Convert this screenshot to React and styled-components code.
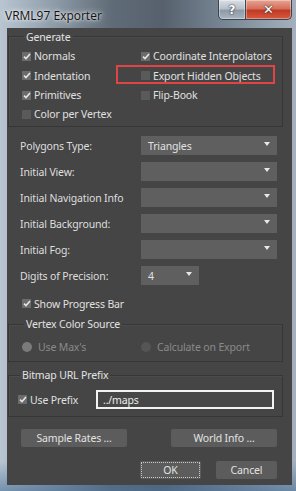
import React from "react";
import styled, { createGlobalStyle } from "styled-components";

const Global = createGlobalStyle`
  html, body { margin: 0; padding: 0; }
  body { font-family: "Noto Sans", "Open Sans", sans-serif; }
`;

const Window = styled.div`
  width: 296px;
  height: 491px;
  box-sizing: border-box;
  padding: 0 4px 6px 7px;
  display: flex;
  flex-direction: column;
  background:
    linear-gradient(180deg, rgba(255,255,255,0) 0%, rgba(255,255,255,0) 94%, rgba(70,110,150,0.6) 100%),
    linear-gradient(90deg, #b9c6d2 0%, #98a6b3 14%, #5f6b77 38%, #56616d 55%, #7c8a98 78%, #a4b1bd 100%);
`;

const TitleBar = styled.div`
  height: 29px;
  display: flex;
  align-items: flex-start;
  margin-left: -7px;
  margin-right: -4px;
`;

const Title = styled.div`
  padding: 7px 0 0 5px;
  flex: 1;
  font-family: "Open Sans", "Noto Sans", sans-serif;
  font-size: 12px;
  color: #111;
  text-shadow: 0 0 6px rgba(255,255,255,0.9), 0 0 3px rgba(255,255,255,0.9);
`;

const CaptionButton = styled.div`
  height: 20px;
  width: ${p => p.$w}px;
  box-sizing: border-box;
  display: flex;
  align-items: center;
  justify-content: center;
  border: 1px solid #3b4450;
  border-top: none;
  border-left: ${p => (p.$first ? "1px solid #3b4450" : "none")};
  border-radius: ${p => (p.$first ? "0 0 0 5px" : "0 0 5px 0")};
  background: ${p =>
    p.$red
      ? "linear-gradient(180deg, #e7a493 0%, #d4705c 45%, #c13a24 55%, #d65a3e 100%)"
      : "linear-gradient(180deg, #d9dfe6 0%, #b7c0ca 45%, #8e9aa6 55%, #a9b4c0 100%)"};
  color: #fff;
  font-family: "DejaVu Sans", sans-serif;
  font-weight: bold;
  font-size: ${p => (p.$red ? 13 : 12)}px;
  text-shadow: 0 0 2px #333, 0 0 1px #222;
  box-shadow: inset 0 0 0 1px rgba(255,255,255,0.35);
`;

const Client = styled.div`
  flex: 1;
  background: #454545;
  padding: 0 9px 6px 1px;
  display: flex;
  flex-direction: column;
  color: #dedede;
  font-size: 10.5px;
  letter-spacing: -0.15px;
`;

const Group = styled.fieldset`
  margin: ${p => p.$top || 0}px 0 0 0;
  padding: ${p => p.$pad};
  border: 1px solid #363636;
  box-shadow: inset 1px 1px 0 #4c4c4c;
  min-width: 0;
`;

const Legend = styled.legend`
  padding: 0 2px;
  margin-left: 2px;
  line-height: 14px;
  font-size: 10.5px;
  color: #e2e2e2;
`;

const CheckGrid = styled.div`
  display: grid;
  grid-template-columns: 119px 1fr;
  grid-auto-rows: 19.3px;
  align-items: center;
  position: relative;
`;

const CheckItem = styled.label`
  display: flex;
  align-items: center;
  gap: 3px;
  white-space: nowrap;
  color: ${p => (p.$disabled ? "#8a8a8a" : "#e0e0e0")};
`;

const Box = styled.span`
  width: 9px;
  height: 9px;
  flex: none;
  background: ${p => (p.$checked ? "#6b6b6b" : "#5a5a5a")};
  display: flex;
  align-items: center;
  justify-content: center;
`;

const Highlight = styled.div`
  position: absolute;
  left: 94px;
  top: 18px;
  width: 159px;
  height: 19px;
  border: 2px solid #e04444;
  box-sizing: border-box;
  pointer-events: none;
`;

const Radio = styled.span`
  width: 10px;
  height: 10px;
  border-radius: 50%;
  flex: none;
  background: ${p => (p.$on ? "#7a7a7a" : "#555")};
  margin-right: 3px;
`;

const FieldRows = styled.div`
  margin-top: 9px;
  display: flex;
  flex-direction: column;
  gap: 7px;
  padding-left: 12px;
`;

const FieldRow = styled.div`
  display: flex;
  align-items: center;
  height: 19px;
`;

const FieldLabel = styled.div`
  width: 121px;
  white-space: nowrap;
  overflow: hidden;
`;

const Select = styled.div`
  width: ${p => p.$w}px;
  height: 19px;
  box-sizing: border-box;
  background: #5f5f5f;
  display: flex;
  align-items: center;
  padding: 0 7px;
  color: #e2e2e2;
`;

const SelectText = styled.span`
  flex: 1;
`;

const Arrow = styled.span`
  width: 0;
  height: 0;
  border-left: 3px solid transparent;
  border-right: 3px solid transparent;
  border-top: 4px solid #e8e8e8;
  margin-top: -4px;
`;

const SingleRow = styled.div`
  margin: 9px 0 0 14px;
  height: 19px;
  display: flex;
  align-items: center;
`;

const RadioRow = styled.div`
  display: grid;
  grid-template-columns: 119px 1fr;
  height: 19px;
  align-items: center;
`;

const PrefixRow = styled.div`
  display: flex;
  align-items: center;
  height: 19px;
`;

const PrefixCheck = styled(CheckItem)`
  width: 78px;
`;

const Input = styled.div`
  width: 178px;
  height: 19px;
  box-sizing: border-box;
  border: 2px solid #f2f2f2;
  background: #474747;
  display: flex;
  align-items: center;
  padding-left: 5px;
  color: #ececec;
`;

const ButtonRow = styled.div`
  margin-top: ${p => p.$top}px;
  display: flex;
  justify-content: ${p => p.$justify};
  gap: 15px;
  padding: 0 6px 0 13px;
`;

const Button = styled.div`
  width: ${p => p.$w}px;
  height: 18px;
  box-sizing: border-box;
  background: #5c5c5c;
  border-radius: 2px;
  display: flex;
  align-items: center;
  justify-content: center;
  color: #e2e2e2;
  outline: ${p => (p.$focus ? "1px dotted #c8c8c8" : "none")};
  outline-offset: -2px;
`;

function Check({ checked, children, disabled, as }) {
  const Item = as || CheckItem;
  return (
    <Item $disabled={disabled}>
      <Box $checked={checked}>
        {checked && (
          <svg width="8" height="7" viewBox="0 0 8 7">
            <path d="M1 3.6 L3 5.6 L7 1" stroke="#e4e4e4" strokeWidth="1.6" fill="none" />
          </svg>
        )}
      </Box>
      {children}
    </Item>
  );
}

const fields = [
  ["Polygons Type:", "Triangles"],
  ["Initial View:", ""],
  ["Initial Navigation Info", ""],
  ["Initial Background:", ""],
  ["Initial Fog:", ""],
];

export default function App() {
  return (
    <Window>
      <Global />
      <TitleBar>
        <Title>VRML97 Exporter</Title>
        <CaptionButton $w={28} $first>?</CaptionButton>
        <CaptionButton $w={46} $red style={{ marginRight: 4 }}>✕</CaptionButton>
      </TitleBar>
      <Client>
        <Group $top={2} $pad="3px 0 2px 13px">
          <Legend>Generate</Legend>
          <CheckGrid>
            <Check checked>Normals</Check>
            <Check checked>Coordinate Interpolators</Check>
            <Check checked>Indentation</Check>
            <Check>Export Hidden Objects</Check>
            <Check checked>Primitives</Check>
            <Check>Flip-Book</Check>
            <Check>Color per Vertex</Check>
            <Highlight />
          </CheckGrid>
        </Group>

        <FieldRows>
          {fields.map(([label, value]) => (
            <FieldRow key={label}>
              <FieldLabel>{label}</FieldLabel>
              <Select $w={136}>
                <SelectText>{value}</SelectText>
                <Arrow />
              </Select>
            </FieldRow>
          ))}
          <FieldRow>
            <FieldLabel>Digits of Precision:</FieldLabel>
            <Select $w={58}>
              <SelectText>4</SelectText>
              <Arrow />
            </Select>
          </FieldRow>
        </FieldRows>

        <SingleRow>
          <Check checked>Show Progress Bar</Check>
        </SingleRow>

        <Group $top={4} $pad="6px 0 5px 13px">
          <Legend>Vertex Color Source</Legend>
          <RadioRow>
            <CheckItem $disabled><Radio $on />Use Max's</CheckItem>
            <CheckItem $disabled><Radio />Calculate on Export</CheckItem>
          </RadioRow>
        </Group>

        <Group $top={6} $pad="8px 0 7px 9px">
          <Legend>Bitmap URL Prefix</Legend>
          <PrefixRow>
            <Check checked as={PrefixCheck}>Use Prefix</Check>
            <Input>../maps</Input>
          </PrefixRow>
        </Group>

        <ButtonRow $top={12} $justify="space-between">
          <Button $w={106}>Sample Rates ...</Button>
          <Button $w={106}>World Info ...</Button>
        </ButtonRow>
        <ButtonRow $top={14} $justify="flex-end">
          <Button $w={61} $focus>OK</Button>
          <Button $w={61}>Cancel</Button>
        </ButtonRow>
      </Client>
    </Window>
  );
}
